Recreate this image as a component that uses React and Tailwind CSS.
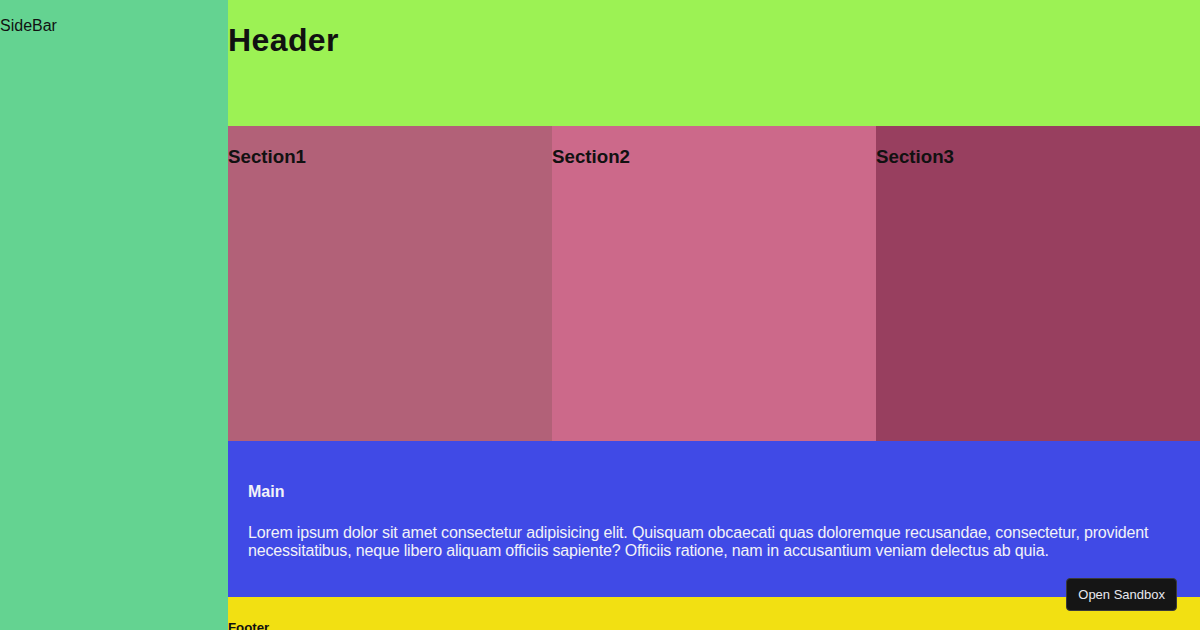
import React from 'react';

const App = () => {
    return (
        <div className="grid grid-cols-[228px_1fr] min-h-screen font-['Liberation_Sans',Arial,sans-serif] text-[#111]">
            {/* Sidebar */}
            <aside className="bg-[#64d391] pt-[14px] text-base leading-6 row-span-4">
                SideBar
            </aside>

            {/* Header */}
            <header className="bg-[#9cf254] h-[126px] flow-root">
                <h1 className="text-[32px] font-bold leading-[1.15] mt-[22px] tracking-[0.4px]">Header</h1>
            </header>

            {/* Sections */}
            <div className="grid grid-cols-3 h-[315px]">
                <section className="bg-[#b26178] flow-root">
                    <h3 className="text-[18.72px] font-bold leading-[1.15] mt-[19.5px]">Section1</h3>
                </section>
                <section className="bg-[#cc698a] flow-root">
                    <h3 className="text-[18.72px] font-bold leading-[1.15] mt-[19.5px]">Section2</h3>
                </section>
                <section className="bg-[#983f5f] flow-root">
                    <h3 className="text-[18.72px] font-bold leading-[1.15] mt-[19.5px]">Section3</h3>
                </section>
            </div>

            {/* Main */}
            <main className="bg-[#404ae6] text-[#f2f2f8] px-5 pt-5 pb-5 flow-root">
                <h4 className="text-base font-bold leading-[1.15] mt-[22px]">Main</h4>
                <p className="text-base leading-[1.15] mt-[22.5px] mb-4 tracking-[-0.16px]">
                    Lorem ipsum dolor sit amet consectetur adipisicing elit. Quisquam obcaecati quas doloremque recusandae, consectetur, provident necessitatibus, neque libero aliquam officiis sapiente? Officiis ratione, nam in accusantium veniam delectus ab quia.
                </p>
            </main>

            {/* Footer */}
            <footer className="bg-[#f2e012] flow-root h-[60px]">
                <h5 className="text-[13.28px] font-bold leading-[1.15] mt-[23px]">Footer</h5>
            </footer>

            <button className="fixed right-[23px] bottom-[19px] h-[33px] px-[11px] rounded-[4px] bg-[#151515] border border-[#3a3a3a] text-[#e8e8f0] text-[13px] font-['Liberation_Sans',Arial,sans-serif]">
                Open Sandbox
            </button>
        </div>
    );
};

export default App;
